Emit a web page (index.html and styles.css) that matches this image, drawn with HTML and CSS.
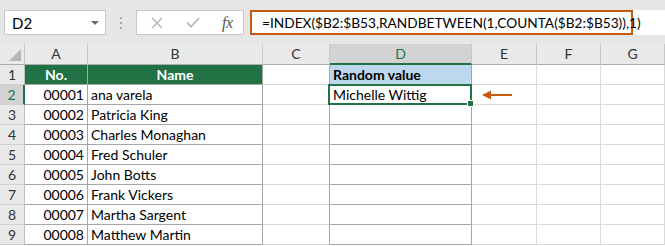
FILE: index.html
```html
<!DOCTYPE html>
<html>
<head>
<meta charset="utf-8">
<link rel="stylesheet" href="styles.css">
</head>
<body>
<div class="app">
  <div class="toolbar">
    <div class="namebox">
      <span class="name">D2</span>
      <svg class="dd" width="8" height="4" viewBox="0 0 8 4"><polygon points="0,0 8,0 4,4" fill="#6d6d6d"/></svg>
    </div>
    <div class="dots"><i></i><i></i><i></i></div>
    <div class="fxbox">
      <svg class="ico" width="12" height="12" viewBox="0 0 12 12"><path d="M1 1 L11 11 M11 1 L1 11" stroke="#b3b3b3" stroke-width="1.3" fill="none"/></svg>
      <svg class="ico" width="14" height="11" viewBox="0 0 14 11"><path d="M1 5.5 L5 9.5 L13 1" stroke="#b3b3b3" stroke-width="1.6" fill="none"/></svg>
      <span class="fx">fx</span>
    </div>
    <div class="formulawrap">
      <div class="formula">=INDEX($B2:$B53,RANDBETWEEN(1,COUNTA($B2:$B53)),1)</div>
    </div>
  </div>
  <div class="sheet">
    <div class="ch corner"><span class="tri"></span></div>
    <div class="ch">A</div>
    <div class="ch">B</div>
    <div class="ch">C</div>
    <div class="ch sel-col">D</div>
    <div class="ch">E</div>
    <div class="ch">F</div>
    <div class="ch">G</div>

    <div class="rh">1</div>
    <div class="c t hd num">No.</div>
    <div class="c t hd">Name</div>
    <div class="c edge"></div>
    <div class="c t blue">Random value</div>
    <div class="c"></div><div class="c"></div><div class="c"></div>

    <div class="rh sel-row">2</div>
    <div class="c t r">00001</div>
    <div class="c t">ana varela</div>
    <div class="c edge"></div>
    <div class="c t active">Michelle Wittig<span class="selbox"><span class="handle"></span></span></div>
    <div class="c arrowcell"><svg width="32" height="10" viewBox="0 0 32 10"><polygon points="0,5 9,0.5 9,9.5" fill="#c55a11"/><rect x="8" y="4" width="22" height="2" fill="#c55a11"/></svg></div>
    <div class="c"></div><div class="c"></div>

    <div class="rh">3</div>
    <div class="c t r">00002</div>
    <div class="c t">Patricia King</div>
    <div class="c edge"></div>
    <div class="c t"></div>
    <div class="c"></div><div class="c"></div><div class="c"></div>

    <div class="rh">4</div>
    <div class="c t r">00003</div>
    <div class="c t">Charles Monaghan</div>
    <div class="c edge"></div>
    <div class="c t"></div>
    <div class="c"></div><div class="c"></div><div class="c"></div>

    <div class="rh">5</div>
    <div class="c t r">00004</div>
    <div class="c t">Fred Schuler</div>
    <div class="c edge"></div>
    <div class="c t"></div>
    <div class="c"></div><div class="c"></div><div class="c"></div>

    <div class="rh">6</div>
    <div class="c t r">00005</div>
    <div class="c t">John Botts</div>
    <div class="c edge"></div>
    <div class="c t"></div>
    <div class="c"></div><div class="c"></div><div class="c"></div>

    <div class="rh">7</div>
    <div class="c t r">00006</div>
    <div class="c t">Frank Vickers</div>
    <div class="c edge"></div>
    <div class="c t"></div>
    <div class="c"></div><div class="c"></div><div class="c"></div>

    <div class="rh">8</div>
    <div class="c t r">00007</div>
    <div class="c t">Martha Sargent</div>
    <div class="c edge"></div>
    <div class="c t"></div>
    <div class="c"></div><div class="c"></div><div class="c"></div>

    <div class="rh">9</div>
    <div class="c t r">00008</div>
    <div class="c t">Matthew Martin</div>
    <div class="c edge"></div>
    <div class="c t"></div>
    <div class="c"></div><div class="c"></div><div class="c"></div>
  </div>
</div>
</body>
</html>
```

FILE: styles.css
```css
* { box-sizing: border-box; }
html, body { margin: 0; padding: 0; background: #fff; }
body { width: 665px; height: 246px; overflow: hidden; font-family: "Lato", "Liberation Sans", sans-serif; font-size: 14px; color: #000; }

.toolbar {
  height: 44px;
  background: #e6e6e6;
  display: flex;
  align-items: flex-start;
  padding-top: 10px;
}
.namebox {
  margin-left: 4px;
  width: 102px;
  height: 25px;
  background: #fff;
  border: 1px solid #c9c9c9;
  display: flex;
  align-items: center;
  justify-content: space-between;
  padding: 0 6px 0 7px;
  font-size: 15px;
}
.dd { margin-top: 1px; }
.dots {
  width: 30px;
  height: 25px;
  display: flex;
  flex-direction: column;
  align-items: center;
  justify-content: center;
  gap: 3px;
}
.dots i { display: block; width: 2px; height: 2px; background: #a9a9a9; }
.fxbox {
  width: 108px;
  height: 25px;
  background: #fff;
  border: 1px solid #c9c9c9;
  display: flex;
  align-items: center;
  padding-left: 14px;
  gap: 23px;
}
.fx {
  font-family: "Liberation Serif", serif;
  font-style: italic;
  font-size: 16px;
  color: #555;
  letter-spacing: -0.5px;
  margin-left: -1px;
}
.formulawrap {
  flex: 1;
  margin-left: 6px;
  height: 25px;
  background: #fff;
}
.formula {
  width: 383px;
  height: 25px;
  border: 2px solid #c55a11;
  padding-left: 10px;
  font-size: 13.7px;
  line-height: 21px;
  white-space: nowrap;
}

.sheet {
  display: grid;
  grid-template-columns: 25px 63px 175px 67px 142px 65px 64px 64px;
  grid-template-rows: 21px repeat(9, 20px);
}
.ch {
  background: #e9e9e9;
  border-right: 1px solid #c8c8c8;
  border-bottom: 1px solid #ababab;
  text-align: center;
  line-height: 20px;
  color: #333;
  font-size: 14px;
}
.corner { position: relative; }
.tri {
  position: absolute;
  right: 3px;
  bottom: 3px;
  width: 12px;
  height: 12px;
  background: #b5b5b5;
  clip-path: polygon(100% 0, 100% 100%, 0 100%);
}
.sel-col {
  background: #d3d3d3;
  color: #217346;
  border-bottom: 2px solid #217346;
}
.rh {
  background: #e9e9e9;
  border-right: 1px solid #c0c0c0;
  border-bottom: 1px solid #d0d0d0;
  text-align: center;
  line-height: 19px;
  color: #333;
}
.sel-row {
  background: #d3d3d3;
  color: #217346;
  border-right: 2px solid #217346;
}
.c {
  border-right: 1px solid #dadada;
  border-bottom: 1px solid #dadada;
  line-height: 19px;
  padding: 0 3px;
  white-space: nowrap;
}
.c.t { border-color: #a6a6a6; }
.c.edge { border-right-color: #a6a6a6; }
.r { text-align: right; }
.hd {
  background: #217346;
  color: #fff;
  font-weight: bold;
  text-align: center;
}
.blue { background: #bdd7ee; font-weight: bold; }
.active { position: relative; }
.selbox {
  position: absolute;
  left: -2px;
  top: -1px;
  right: -1px;
  bottom: -1px;
  border: 2px solid #217346;
}
.handle {
  position: absolute;
  right: -4px;
  bottom: -4px;
  width: 7px;
  height: 7px;
  background: #217346;
  border: 1px solid #fff;
}
.arrowcell { padding-left: 10px; display: flex; align-items: center; }
```
